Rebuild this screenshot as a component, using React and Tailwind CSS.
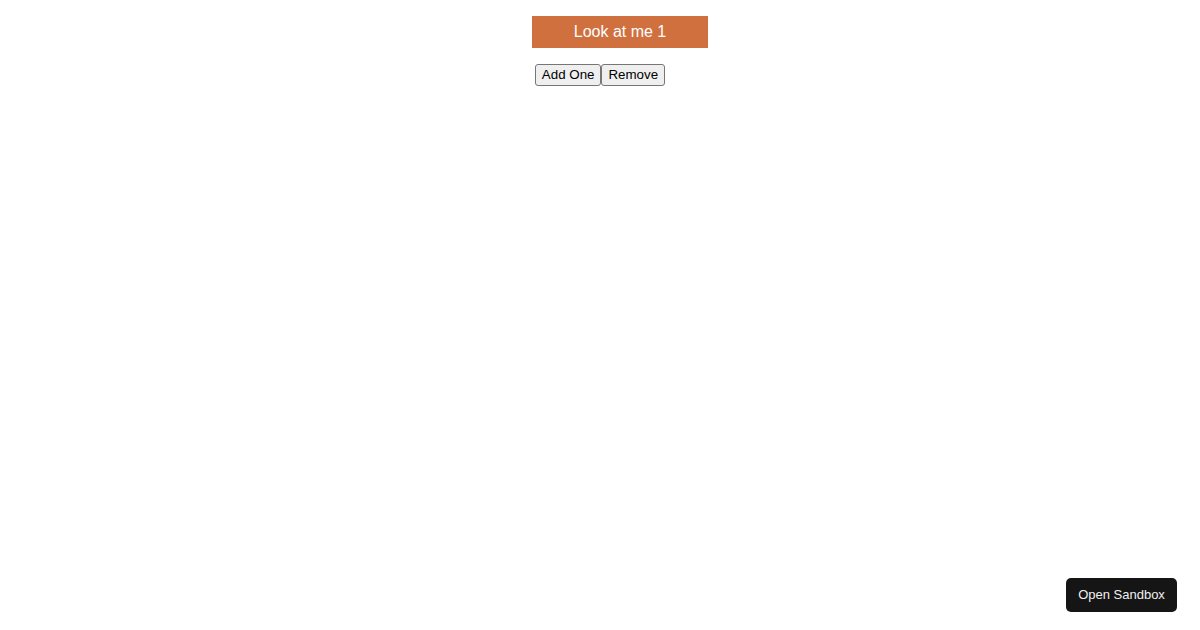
import React, { useState } from "react";

const btn =
  "h-[22px] px-[6px] border border-[#767676] rounded-[3px] bg-[#efefef] text-[13.33px] leading-none text-black";

export default function App() {
  const [count, setCount] = useState(1);

  return (
    <div className="relative min-h-[630px] bg-white font-['Liberation_Sans',Arial,sans-serif]">
      <div className="flex flex-col items-center pt-4">
        <div className="ml-10 flex h-8 w-[176px] items-center justify-center bg-[#d0703f] text-base text-white">
          Look at me {count}
        </div>
        <div className="mt-4 flex">
          <button className={btn} onClick={() => setCount(count + 1)}>
            Add One
          </button>
          <button className={btn} onClick={() => setCount(count - 1)}>
            Remove
          </button>
        </div>
      </div>
      <button className="absolute bottom-[18px] right-[23px] h-[34px] w-[111px] rounded-[5px] bg-[#151515] text-[13px] text-[#f0f0f0]">
        Open Sandbox
      </button>
    </div>
  );
}
